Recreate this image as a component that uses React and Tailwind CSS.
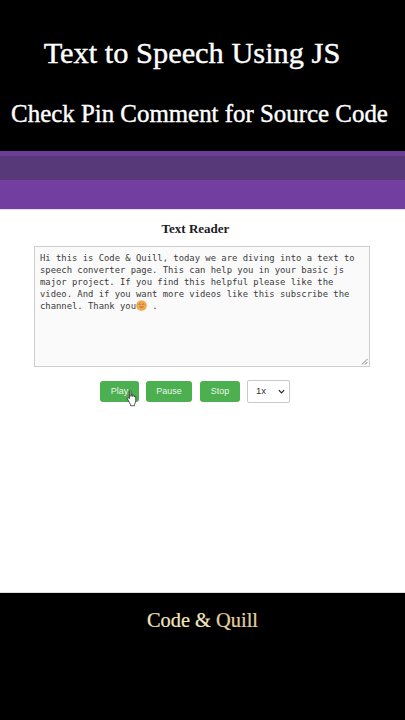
import React from "react";

function SmileEmoji() {
  return (
    <svg viewBox="0 0 12 12" className="inline-block w-[11px] h-[11px] align-[-2px]">
      <circle cx="6" cy="6" r="5.8" fill="#f0a850" />
      <path d="M3 4.8q1-1.1 2 0M7 4.8q1-1.1 2 0" fill="none" stroke="#8a5a24" strokeWidth="0.9" />
      <path d="M3.2 7q2.8 3 5.6 0z" fill="#b06c30" />
    </svg>
  );
}

function HandCursor() {
  return (
    <svg viewBox="0 0 14 20" className="absolute left-[26px] top-[9px] w-[12px] h-[17px]">
      <path
        d="M4 1.6c0-1 1.7-1 1.7 0v6l.3-1.6c.2-.9 1.6-.8 1.6.2l.2 1.4.3-1c.3-.8 1.5-.6 1.5.3l.1 1.2.3-.5c.4-.6 1.4-.3 1.4.5v4.4c0 2-.8 3-1.4 4.4v1.6H5.2v-1.4L1.6 10.400c-.6-1 .6-1.900 1.500-1L4 10.200z"
        fill="#fff"
        stroke="#222"
        strokeWidth="0.9"
        strokeLinejoin="round"
      />
    </svg>
  );
}

function GreenButton({ label, width, children }) {
  return (
    <button
      type="button"
      className={`relative h-[21px] rounded-[3px] bg-[#4caf50] text-[9px] text-[#e9f5ea] font-['Liberation_Sans',sans-serif] ${width}`}
    >
      {label}
      {children}
    </button>
  );
}

export default function App() {
  return (
    <div className="w-[405px] h-[720px] flex flex-col bg-white overflow-hidden">
      <header className="h-[151px] bg-black flex flex-col items-center text-white font-['Liberation_Serif',serif] [-webkit-text-stroke:0.4px_white]">
        <h1 className="mt-[33px] h-[40px] ml-[-21px] text-[30.400px] leading-[40px] whitespace-nowrap">Text to Speech Using JS</h1>
        <p className="mt-[25px] ml-[-6px] text-[24.900px] leading-[32px] whitespace-nowrap">Check Pin Comment for Source Code</p>
      </header>

      <div className="h-[58px] flex flex-col bg-[#723fa0]">
        <div className="h-[5px] bg-[#6b3d96]" />
        <div className="h-[24px] bg-[#573878]" />
      </div>

      <main className="h-[383px] flex flex-col items-center border-t border-[#e8e0ee]">
        <h2 className="mt-[11px] ml-[-14px] h-[15px] text-[13px] leading-[15px] font-bold text-[#1c1c1c] font-['Liberation_Serif',serif]">Text Reader</h2>
        <div className="relative mt-[10px] ml-[-1px] w-[336px] h-[121px] border border-[#cfcfcf] bg-[#fafafa] px-[5px] pt-[5px] text-[8.870px] leading-[12px] text-[#3a3a3a] font-['DejaVu_Sans_Mono',monospace]">
          Hi this is Code &amp; Quill, today we are diving into a text to speech converter page. This can help you in your basic js major project. If you find this helpful please like the video. And if you want more videos like this subscribe the channel. Thank you<SmileEmoji /> .
          <svg viewBox="0 0 8 8" className="absolute right-[1px] bottom-[1px] w-[7px] h-[7px]">
            <path d="M1 7.500 7.500 1M4.500 7.500 7.500 4.500" stroke="#666" strokeWidth="0.9" />
          </svg>
        </div>
        <div className="mt-[13px] ml-[-15px] flex items-center gap-[7px]">
          <GreenButton label="Play" width="w-[39px]">
            <HandCursor />
          </GreenButton>
          <GreenButton label="Pause" width="w-[46px]" />
          <GreenButton label="Stop" width="w-[40px] ml-[1px]" />
          <div className="w-[43px] h-[23px] flex items-center justify-between pl-[8px] pr-[4px] rounded-[2px] border border-[#c8c8c8] bg-white text-[9.500px] text-[#333] font-['Liberation_Sans',sans-serif]">
            <span>1x</span>
            <svg viewBox="0 0 8 5" className="w-[7px] h-[5px]">
              <path d="M1 1l3 3 3-3" fill="none" stroke="#222" strokeWidth="1.400" />
            </svg>
          </div>
        </div>
      </main>

      <footer className="flex-1 bg-black border-t border-[#ddd] flex justify-center pt-[13px] font-['Liberation_Serif',serif] text-[20.400px] leading-[28px] [-webkit-text-stroke:0.2px_#f4e7bd]">
        <span className="text-[#f4e7bd]">Code &amp; <span className="text-[#e3c99b]">Quill</span></span>
      </footer>
    </div>
  );
}
